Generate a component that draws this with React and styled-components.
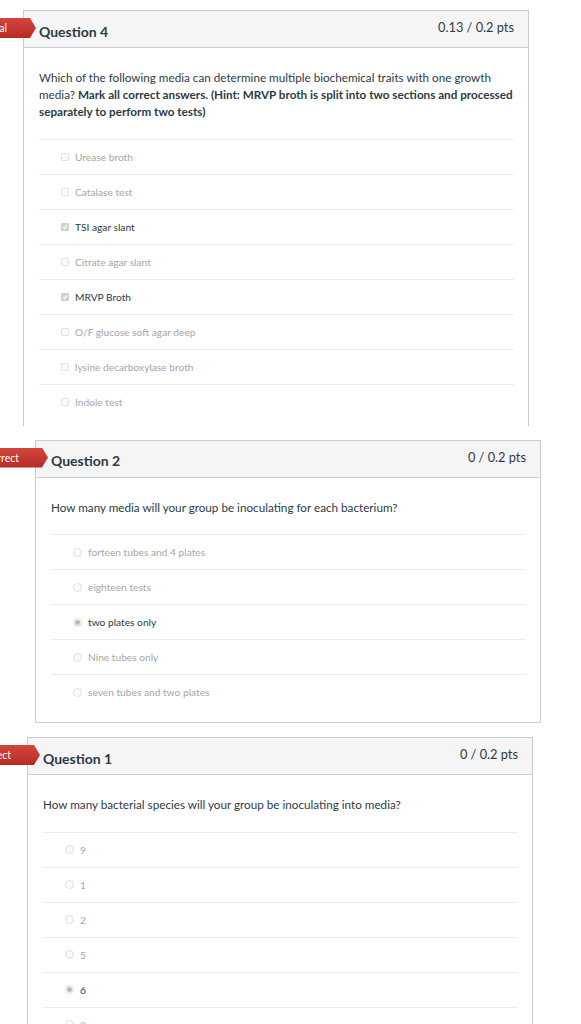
import styled, { createGlobalStyle } from 'styled-components';

const GlobalStyle = createGlobalStyle`
  html, body {
    margin: 0;
    padding: 0;
    background: #ffffff;
    font-family: Lato, "Open Sans", "Liberation Sans", sans-serif;
  }
`;

const Page = styled.main`
  display: flex;
  flex-flow: column;
  gap: 14px;
  padding-top: 10px;
  width: 581px;
  height: 1024px;
  overflow: hidden;
`;

const Card = styled.section`
  position: relative;
  width: 506px;
  box-sizing: border-box;
  margin-left: ${(p) => p.$offset}px;
  border: 1px solid #c7cdd1;
  border-bottom: ${(p) => (p.$open ? 'none' : '1px solid #c7cdd1')};
  background: #ffffff;
  flex-shrink: 0;
`;

const Badge = styled.div`
  position: absolute;
  top: 7px;
  right: calc(100% - 12px);
  width: 90px;
  height: 20px;
  display: flex;
  align-items: center;
  justify-content: flex-end;
  padding-right: 29px;
  box-sizing: border-box;
  background: linear-gradient(#d3463c, #b52b24);
  clip-path: polygon(0 0, 84px 0, 90px 50%, 84px 100%, 0 100%);
  color: #ffffff;
  font-size: 10.5px;
  z-index: 2;
`;

const Header = styled.header`
  display: flex;
  justify-content: space-between;
  align-items: center;
  height: 36px;
  padding: 0 14px 0 15px;
  background: #f5f5f5;
  border-bottom: 1px solid #c7cdd1;
`;

const Title = styled.h2`
  margin: 4px 0 0;
  font-size: 14px;
  font-weight: 700;
  color: #2d3b45;
`;

const Points = styled.span`
  margin-bottom: 4px;
  font-size: 12.8px;
  font-weight: 400;
  color: #2d3b45;
`;

const Body = styled.div`
  padding: 21px 14px ${(p) => p.$bottom}px 15px;
`;

const Prompt = styled.p`
  margin: 0 0 18.5px;
  font-size: 11.7px;
  line-height: 17px;
  color: #2d3b45;

  strong {
    font-weight: 700;
    color: #2d3b45;
  }
`;

const AnswerList = styled.ul`
  list-style: none;
  margin: 0;
  padding: 0;
`;

const Answer = styled.li`
  display: flex;
  align-items: center;
  gap: 6px;
  height: 35px;
  padding-left: 22px;
  border-top: 1px solid #ececec;
  box-sizing: border-box;
  font-size: 10.2px;
  color: ${(p) => (p.$selected ? '#2d3b45' : '#a6a6a6')};
`;

const Box = styled.span`
  width: 8px;
  height: 8px;
  box-sizing: border-box;
  border: 1px solid ${(p) => (p.$checked ? '#cfcfcf' : '#e2e2e2')};
  border-radius: 1px;
  background: ${(p) => (p.$checked ? '#d2d2d2' : '#fafafa')};
  display: flex;
  align-items: center;
  justify-content: center;
`;

const Radio = styled.span`
  width: 9px;
  height: 9px;
  box-sizing: border-box;
  border-radius: 50%;
  border: 1px solid #dedede;
  background: #fafafa;
  display: flex;
  align-items: center;
  justify-content: center;

  &::after {
    content: '';
    width: 5px;
    height: 5px;
    border-radius: 50%;
    background: ${(p) => (p.$checked ? '#b9b9b9' : 'transparent')};
  }
`;

function Check() {
  return (
    <svg width="6" height="6" viewBox="0 0 6 6">
      <path d="M1 3.2 L2.4 4.6 L5 1.4" stroke="#ffffff" strokeWidth="1.1" fill="none" />
    </svg>
  );
}

function Choice({ kind, selected, children }) {
  return (
    <Answer $selected={selected}>
      {kind === 'check' ? (
        <Box $checked={selected}>{selected && <Check />}</Box>
      ) : (
        <Radio $checked={selected} />
      )}
      {children}
    </Answer>
  );
}

const questions = [
  {
    offset: 23,
    badge: 'Partial',
    title: 'Question 4',
    points: '0.13 / 0.2 pts',
    kind: 'check',
    open: true,
    bottom: 7,
    prompt: (
      <>
        Which of the following media can determine multiple biochemical traits
        with one growth media?{' '}
        <strong>
          Mark all correct answers. (Hint: MRVP broth is split into two sections
          and processed separately to perform two tests)
        </strong>
      </>
    ),
    answers: [
      ['Urease broth', false],
      ['Catalase test', false],
      ['TSI agar slant', true],
      ['Citrate agar slant', false],
      ['MRVP Broth', true],
      ['O/F glucose soft agar deep', false],
      ['lysine decarboxylase broth', false],
      ['Indole test', false],
    ],
  },
  {
    offset: 35,
    badge: 'Incorrect',
    title: 'Question 2',
    points: '0 / 0.2 pts',
    kind: 'radio',
    bottom: 13,
    prompt: 'How many media will your group be inoculating for each bacterium?',
    answers: [
      ['forteen tubes and 4 plates', false],
      ['eighteen tests', false],
      ['two plates only', true],
      ['Nine tubes only', false],
      ['seven tubes and two plates', false],
    ],
  },
  {
    offset: 27,
    badge: 'Incorrect',
    title: 'Question 1',
    points: '0 / 0.2 pts',
    kind: 'radio',
    bottom: 13,
    prompt: 'How many bacterial species will your group be inoculating into media?',
    answers: [
      ['9', false],
      ['1', false],
      ['2', false],
      ['5', false],
      ['6', true],
      ['3', false],
      ['4', false],
    ],
  },
];

export default function App() {
  return (
    <>
      <GlobalStyle />
      <Page>
        {questions.map((q) => (
          <Card key={q.title} $offset={q.offset} $open={q.open}>
            <Badge>{q.badge}</Badge>
            <Header>
              <Title>{q.title}</Title>
              <Points>{q.points}</Points>
            </Header>
            <Body $bottom={q.bottom}>
              <Prompt>{q.prompt}</Prompt>
              <AnswerList>
                {q.answers.map(([label, selected]) => (
                  <Choice key={label} kind={q.kind} selected={selected}>
                    {label}
                  </Choice>
                ))}
              </AnswerList>
            </Body>
          </Card>
        ))}
      </Page>
    </>
  );
}
